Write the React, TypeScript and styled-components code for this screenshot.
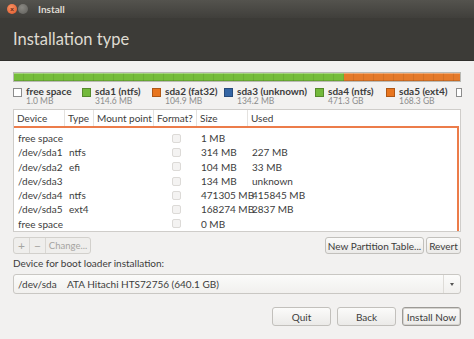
import React from 'react';
import styled, { createGlobalStyle } from 'styled-components';

const GlobalStyle = createGlobalStyle`
  html, body { margin: 0; padding: 0; background: #f2f1f0; }
  body { font-family: Lato, "Open Sans", sans-serif; }
`;

const Window = styled.div`
  width: 474px;
  height: 339px;
  overflow: hidden;
  background: #f2f1f0;
  display: flex;
  flex-direction: column;
  font-size: 10px;
  color: #3c3c3c;
`;

const TitleBar = styled.div`
  height: 18px;
  display: flex;
  align-items: center;
  padding-left: 7px;
  background: linear-gradient(#54534e, #403f3b);
`;

const WinButton = styled.div<{ $close?: boolean }>`
  width: 10px;
  height: 10px;
  border-radius: 50%;
  margin-right: 1px;
  background: ${({ $close }) => ($close ? 'radial-gradient(circle at 40% 35%, #f79263, #e0562a)' : 'radial-gradient(circle at 40% 35%, #8a8983, #5f5e5a)')};
  display: flex;
  align-items: center;
  justify-content: center;
  color: #5a2010;
  font-size: 7px;
  line-height: 1;
  font-weight: bold;
`;

const TitleText = styled.span`
  margin-left: 9px;
  color: #dfdbd2;
  font-weight: bold;
  font-size: 10px;
`;

const Header = styled.div`
  height: 42px;
  background: #3c3b37;
  border-bottom: 1px solid #2f2e2b;
  display: flex;
  align-items: center;
  padding-left: 13px;
  color: #dfdbd2;
  font-size: 16.5px;
`;

const Body = styled.div`
  flex: 1;
  padding: 11px 13px 0 13px;
  display: flex;
  flex-direction: column;
`;

const Bar = styled.div`
  height: 8px;
  display: flex;
  border: 1px solid #b9b9b4;
`;

const Segment = styled.div<{ $color: string }>`
  background-color: ${({ $color }) => $color};
  background-image: repeating-linear-gradient(90deg, transparent 0 9px, rgba(0,0,0,0.08) 9px 10px);
  box-shadow: inset 0 1px 0 rgba(255,255,255,0.35), inset 0 -1px 0 rgba(0,0,0,0.12);
`;

const Legend = styled.div`
  display: flex;
  margin-top: 3px;
  white-space: nowrap;
`;

const LegendItem = styled.div<{ $w: number }>`
  display: flex;
  width: ${({ $w }) => $w}px;
  flex-shrink: 0;
`;

const Swatch = styled.div<{ $color: string }>`
  width: 7px;
  height: 7px;
  margin-top: 3px;
  margin-right: 4px;
  border: 1px solid ${({ $color }) => ($color === '#fff' ? '#8c8c8c' : 'rgba(0,0,0,0.25)')};
  background: ${({ $color }) => $color};
`;

const LegendName = styled.div`
  font-weight: bold;
  color: #3c3c3c;
  line-height: 12px;
`;

const LegendSize = styled.div`
  color: #8d8d8d;
  font-size: 8.5px;
  line-height: 9px;
`;

const Table = styled.div`
  margin-top: 3px;
  height: 121px;
  border: 1px solid #cfcdca;
  background: #fff;
  display: flex;
  flex-direction: column;
`;

const grid = '51px 29px 60px 43px 51px 1fr';

const HeaderRow = styled.div`
  display: grid;
  grid-template-columns: ${grid};
  height: 16px;
  border-bottom: 2px solid #ec7c4a;
  margin-right: 1px;
`;

const HeadCell = styled.div`
  padding-left: 3px;
  line-height: 16px;
  border-right: 1px solid #e4e2df;
  &:last-child { border-right: none; }
`;

const Rows = styled.div`
  flex: 1;
  border-right: 2px solid #ec7c4a;
  margin-right: 1px;
  padding-top: 3px;
`;

const Row = styled.div`
  display: grid;
  grid-template-columns: ${grid};
  height: 14.3px;
  line-height: 14.3px;
`;

const Cell = styled.div`
  padding-left: 4px;
  white-space: nowrap;
`;

const CheckCell = styled.div`
  display: flex;
  align-items: center;
  justify-content: center;
  padding-left: 1px;
`;

const Check = styled.div`
  width: 7px;
  height: 7px;
  border: 1px solid #dcdad7;
  border-radius: 2px;
  background: #f4f3f2;
`;

const ToolRow = styled.div`
  display: flex;
  align-items: center;
  margin-top: 5px;
  height: 17px;
`;

const ButtonGroup = styled.div`
  display: flex;
  border: 1px solid #d2d0cc;
  border-radius: 3px;
  background: #efeeec;
  height: 15px;
`;

const GroupButton = styled.div<{ $w: number; $big?: boolean }>`
  width: ${({ $w }) => $w}px;
  display: flex;
  align-items: center;
  justify-content: center;
  color: #a5a4a1;
  font-size: ${({ $big }) => ($big ? 12 : 9.5)}px;
  border-right: 1px solid #d9d7d3;
  &:last-child { border-right: none; }
`;

const Spacer = styled.div`
  flex: 1;
`;

const Button = styled.div<{ $w: number; $h?: number; $default?: boolean }>`
  width: ${({ $w }) => $w}px;
  height: ${({ $h }) => $h ?? 15}px;
  box-sizing: border-box;
  border: 1px solid ${({ $default }) => ($default ? '#9c9a96' : '#c2c0bc')};
  border-radius: 3px;
  background: linear-gradient(#fbfbfa, #ebeae8);
  display: flex;
  align-items: center;
  justify-content: center;
  color: #3c3c3c;
  margin-left: 2px;
  box-shadow: ${({ $default }) => ($default ? 'inset 0 0 0 1px #d5d3cf' : 'none')};
`;

const Label = styled.div`
  margin-top: 3px;
  height: 12px;
  line-height: 12px;
`;

const Combo = styled.div`
  margin-top: 5px;
  height: 20px;
  box-sizing: border-box;
  border: 1px solid #c9c7c3;
  border-radius: 3px;
  background: linear-gradient(#fbfbfa, #f1f0ee);
  display: flex;
  align-items: center;
  padding-left: 4px;
`;

const ComboDevice = styled.span`
  width: 49px;
`;

const ComboArrow = styled.div`
  margin-left: auto;
  width: 16px;
  height: 100%;
  border-left: 1px solid #dedcd8;
  display: flex;
  align-items: center;
  justify-content: center;
  &::after {
    content: '';
    border-left: 2.5px solid transparent;
    border-right: 2.5px solid transparent;
    border-top: 3px solid #555;
  }
`;

const Footer = styled.div`
  display: flex;
  justify-content: flex-end;
  margin-top: 13px;
  gap: 4px;
`;

const partitions = [
  { name: 'free space', size: '1.0 MB', color: '#fff', w: 69 },
  { name: 'sda1 (ntfs)', size: '314.6 MB', color: '#73b93b', w: 70 },
  { name: 'sda2 (fat32)', size: '104.9 MB', color: '#e8751e', w: 72 },
  { name: 'sda3 (unknown)', size: '134.2 MB', color: '#3465a4', w: 91 },
  { name: 'sda4 (ntfs)', size: '471.3 GB', color: '#73b93b', w: 71 },
  { name: 'sda5 (ext4)', size: '168.3 GB', color: '#e8751e', w: 70 },
  { name: '', size: '', color: '#fff', w: 10 },
];

const rows = [
  ['free space', '', '', '1 MB', ''],
  ['/dev/sda1', 'ntfs', '', '314 MB', '227 MB'],
  ['/dev/sda2', 'efi', '', '104 MB', '33 MB'],
  ['/dev/sda3', '', '', '134 MB', 'unknown'],
  ['/dev/sda4', 'ntfs', '', '471305 MB', '415845 MB'],
  ['/dev/sda5', 'ext4', '', '168274 MB', '2837 MB'],
  ['free space', '', '', '0 MB', ''],
];

const columns = ['Device', 'Type', 'Mount point', 'Format?', 'Size', 'Used'];

const App = () => {
  return (
    <Window>
      <GlobalStyle />
      <TitleBar>
        <WinButton $close>×</WinButton>
        <WinButton />
        <TitleText>Install</TitleText>
      </TitleBar>
      <Header>Installation type</Header>
      <Body>
        <Bar>
          <Segment $color="#76bd3a" style={{ width: 330 }} />
          <Segment $color="#e57a2a" style={{ flex: 1 }} />
        </Bar>
        <Legend>
          {partitions.map((p, i) => (
            <LegendItem key={i} $w={p.w}>
              <Swatch $color={p.color} />
              <div>
                <LegendName>{p.name}</LegendName>
                <LegendSize>{p.size}</LegendSize>
              </div>
            </LegendItem>
          ))}
        </Legend>
        <Table>
          <HeaderRow>
            {columns.map(c => (
              <HeadCell key={c}>{c}</HeadCell>
            ))}
          </HeaderRow>
          <Rows>
            {rows.map((r, i) => (
              <Row key={i}>
                <Cell>{r[0]}</Cell>
                <Cell>{r[1]}</Cell>
                <Cell>{r[2]}</Cell>
                <CheckCell><Check /></CheckCell>
                <Cell>{r[3]}</Cell>
                <Cell>{r[4]}</Cell>
              </Row>
            ))}
          </Rows>
        </Table>
        <ToolRow>
          <ButtonGroup>
            <GroupButton $w={15} $big>+</GroupButton>
            <GroupButton $w={15} $big>−</GroupButton>
            <GroupButton $w={44}>Change...</GroupButton>
          </ButtonGroup>
          <Spacer />
          <Button $w={99} $h={17}>New Partition Table...</Button>
          <Button $w={35} $h={17}>Revert</Button>
        </ToolRow>
        <Label>Device for boot loader installation:</Label>
        <Combo>
          <ComboDevice>/dev/sda</ComboDevice>
          <span>ATA Hitachi HTS72756 (640.1 GB)</span>
          <ComboArrow />
        </Combo>
        <Footer>
          <Button $w={59} $h={19}>Quit</Button>
          <Button $w={59} $h={19}>Back</Button>
          <Button $w={59} $h={19} $default>Install Now</Button>
        </Footer>
      </Body>
    </Window>
  );
};

export default App;
